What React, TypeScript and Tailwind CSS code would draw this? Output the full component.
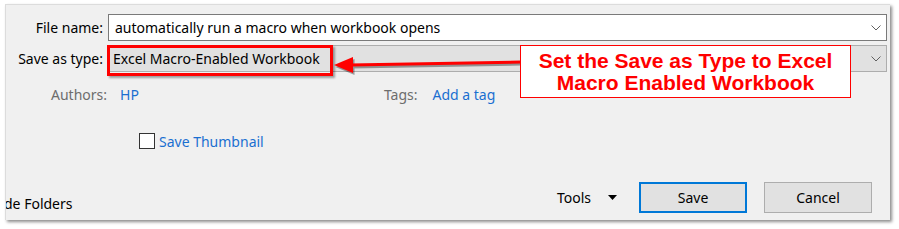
const font = { fontFamily: '"Noto Sans", "Open Sans", sans-serif' };

function Chevron() {
  return (
    <svg width="10" height="6" viewBox="0 0 10 6" className="shrink-0">
      <path d="M0.5 0.5 L5 5 L9.5 0.5" fill="none" stroke="#606060" strokeWidth="1" />
    </svg>
  );
}

export default function App() {
  return (
    <div className="relative w-[899px] h-[229px] bg-white pt-[4px] pl-[5px] text-[14px] text-black" style={font}>
      <div className="relative w-[885px] h-[216px] bg-[#f0f0f0] border-t border-l border-[#dcdcdc] shadow-[2px_2px_3px_rgba(0,0,0,0.45)] overflow-hidden">
        {/* file name */}
        <div className="flex items-center mt-[9px] h-[27px]">
          <div className="w-[97px] text-right">File name:</div>
          <div className="ml-[5px] w-[779px] h-[27px] bg-white border border-[#7a7a7a] flex items-center justify-between pl-[6px] pr-[5px]">
            <span>automatically run a macro when workbook opens</span>
            <Chevron />
          </div>
        </div>
        {/* save as type */}
        <div className="flex items-center mt-[4px] h-[27px]">
          <div className="w-[97px] text-right">Save as type:</div>
          <div className="ml-[5px] w-[779px] h-[27px] bg-[#e1e1e1] border border-[#adadad] flex items-center justify-between pl-[4px] pr-[5px]">
            <span>Excel Macro-Enabled Workbook</span>
            <Chevron />
          </div>
        </div>
        {/* authors / tags */}
        <div className="flex items-center mt-[12px] h-[20px]">
          <span className="ml-[45px] text-[#6d6d6d]">Authors:</span>
          <span className="ml-[13px] text-[#1a6fd0]">HP</span>
          <span className="ml-[245px] text-[#6d6d6d]">Tags:</span>
          <span className="ml-[15px] text-[#1a6fd0]">Add a tag</span>
        </div>
        {/* thumbnail */}
        <div className="flex items-center mt-[28px] h-[18px] ml-[133px]">
          <div className="w-[16px] h-[16px] border border-[#333333] bg-white" />
          <span className="ml-[4px] text-[#1a6fd0]">Save Thumbnail</span>
        </div>
        {/* bottom bar */}
        <div className="flex items-center mt-[32px] h-[31px]">
          <span className="w-[66px] shrink-0 whitespace-nowrap self-end translate-y-[1px] -translate-x-[2px]">de Folders</span>
          <span className="ml-[485px]">Tools</span>
          <svg width="9" height="5" viewBox="0 0 9 5" className="ml-[17px]">
            <path d="M0 0 L9 0 L4.5 5 Z" fill="#000" />
          </svg>
          <button className="ml-[22px] w-[108px] h-[31px] bg-[#e1e1e1] border-2 border-[#0078d7]">Save</button>
          <button className="ml-[17px] w-[108px] h-[31px] bg-[#e1e1e1] border border-[#adadad]">Cancel</button>
        </div>
      </div>

      {/* annotation: highlight */}
      <div className="absolute left-[107px] top-[45px] w-[226px] h-[31px] border-[3px] border-[#ff0000] shadow-[2px_2px_2px_rgba(0,0,0,0.35)]" />

      {/* annotation: arrow */}
      <svg className="absolute left-[330px] top-[52px]" width="195" height="28" viewBox="0 0 195 28">
        <g transform="translate(1.5,2)" opacity="0.35">
          <line x1="20" y1="13" x2="191" y2="10" stroke="#000" strokeWidth="3" />
          <polygon points="4,13 23,5 23,21" fill="#000" />
        </g>
        <line x1="20" y1="13" x2="191" y2="10" stroke="#ff0000" strokeWidth="3" />
        <polygon points="4,13 23,5 23,21" fill="#ff0000" />
      </svg>

      {/* annotation: callout */}
      <div
        className="absolute left-[520px] top-[45px] w-[331px] h-[53px] bg-white border border-[#ff0000] flex flex-col items-center justify-center text-[#ff0000] font-bold text-[21px] leading-[22px]"
        style={{ fontFamily: '"Liberation Sans", Arial, sans-serif' }}
      >
        <span>Set the Save as Type to Excel</span>
        <span>Macro Enabled Workbook</span>
      </div>
    </div>
  );
}
